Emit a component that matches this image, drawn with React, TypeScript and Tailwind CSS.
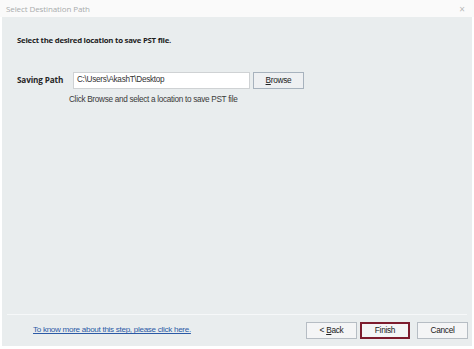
import React from 'react';

const ui = { fontFamily: '"Open Sans", "Noto Sans", sans-serif' };
const classic = { fontFamily: '"Liberation Sans", Arial, sans-serif' };

export default function App() {
  return (
    <div className="w-[474px] h-[349px] bg-white flex flex-col overflow-hidden" style={ui}>
      {/* title bar */}
      <div className="h-[17px] shrink-0 bg-[#fafafa] flex items-center justify-between pl-[6px] pr-[9px]">
        <span className="text-[8px] text-[#a9acad] tracking-[-0.1px]">Select Destination Path</span>
        <span className="text-[10px] leading-none text-[#b9b9b9]">×</span>
      </div>

      {/* body */}
      <div className="flex-1 mx-[2px] mb-[3px] bg-[#e9edee] flex flex-col">
        <div className="pl-[15px] pt-[18px] text-[7.8px] font-bold text-[#1e1e1e] tracking-[-0.25px]">
          Select the desired location to save PST file.
        </div>

        <div className="flex items-center mt-[25px] pl-[15px]">
          <span className="w-[56px] text-[8.2px] font-bold text-[#262626] tracking-[-0.15px]">Saving Path</span>
          <div
            className="w-[177px] h-[17px] bg-white border border-[#cfd2d4] flex items-center pl-[3px] text-[8.2px] text-[#333] tracking-[-0.3px]"
            style={classic}
          >
            C:\Users\AkashT\Desktop
          </div>
          <button
            className="ml-[3px] w-[51px] h-[17px] bg-[#eef0f2] border border-[#a7b2bd] text-[8.3px] text-[#222] tracking-[-0.3px]"
            style={classic}
          >
            <span className="underline">B</span>rowse
          </button>
        </div>

        <div className="pl-[67px] mt-[5px] text-[8.2px] text-[#3a3a3a] tracking-[-0.3px]" style={classic}>
          Click Browse and select a location to save PST file
        </div>

        <div className="flex-1" />

        <div className="mx-[5px] h-px bg-[#f6f8f9]" />

        <div className="flex items-center h-[31px] pl-[31px] pr-[4px]">
          <a className="text-[8.1px] text-[#2b5aa6] underline tracking-[-0.3px]" style={classic}>
            To know more about this step, please click here.
          </a>
          <div className="flex-1" />
          <div className="flex items-center" style={classic}>
            <button className="w-[51px] h-[17px] bg-[#f4f5f6] border border-[#b6bdc4] text-[8.3px] text-[#222] tracking-[-0.3px]">
              &lt; <span className="underline">B</span>ack
            </button>
            <button className="ml-[3px] w-[50px] h-[17px] bg-[#f4f5f6] border-2 border-[#7d1c2e] text-[8.3px] text-[#222] tracking-[-0.3px]">
              Finish
            </button>
            <button className="ml-[7px] w-[51px] h-[17px] bg-[#f4f5f6] border border-[#b6bdc4] text-[8.3px] text-[#222] tracking-[-0.3px]">
              Cancel
            </button>
          </div>
        </div>
      </div>
    </div>
  );
}
